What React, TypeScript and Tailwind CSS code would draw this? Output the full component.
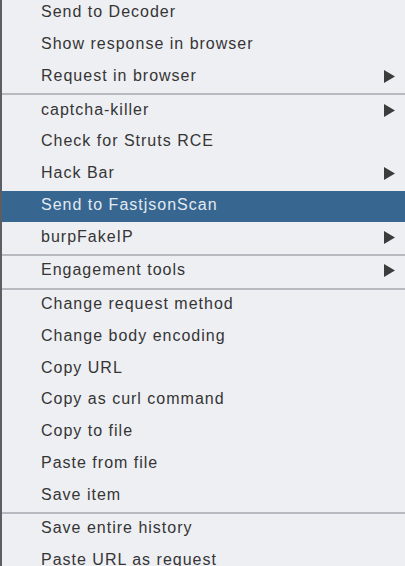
import React from 'react'

type Entry =
  | { kind: 'item'; label: string; submenu?: boolean; active?: boolean }
  | { kind: 'sep' }

const entries: Entry[] = [
  { kind: 'item', label: 'Send to Decoder' },
  { kind: 'item', label: 'Show response in browser' },
  { kind: 'item', label: 'Request in browser', submenu: true },
  { kind: 'sep' },
  { kind: 'item', label: 'captcha-killer', submenu: true },
  { kind: 'item', label: 'Check for Struts RCE' },
  { kind: 'item', label: 'Hack Bar', submenu: true },
  { kind: 'item', label: 'Send to FastjsonScan', active: true },
  { kind: 'item', label: 'burpFakeIP', submenu: true },
  { kind: 'sep' },
  { kind: 'item', label: 'Engagement tools', submenu: true },
  { kind: 'sep' },
  { kind: 'item', label: 'Change request method' },
  { kind: 'item', label: 'Change body encoding' },
  { kind: 'item', label: 'Copy URL' },
  { kind: 'item', label: 'Copy as curl command' },
  { kind: 'item', label: 'Copy to file' },
  { kind: 'item', label: 'Paste from file' },
  { kind: 'item', label: 'Save item' },
  { kind: 'sep' },
  { kind: 'item', label: 'Save entire history' },
  { kind: 'item', label: 'Paste URL as request' },
]

// submenu arrow, solid triangle
function Arrow({ active }: { active?: boolean }) {
  return (
    <svg width="11" height="13" viewBox="0 0 11 13" className="-mt-[2px] shrink-0">
      <path d="M0 0L11 6.5L0 13Z" fill={active ? '#e4ecf3' : '#3c3c3c'} />
    </svg>
  )
}

export default function App() {
  return (
    <div className="h-[566px] w-[405px] overflow-hidden bg-[#eeeff3]">
      <div
        className="-mt-[2px] flex flex-col border-l-2 border-[#5b5e63] text-[16px] tracking-[1px]"
        style={{ fontFamily: '"Liberation Sans", Arial, sans-serif' }}
      >
        {entries.map((e, i) =>
          e.kind === 'sep' ? (
            <div key={i} className="h-[2px] bg-[#b7bac1]" />
          ) : (
            <div
              key={i}
              className={
                e.active
                  ? 'flex h-[31.75px] items-center justify-between bg-[#376690] pl-[39px] pr-[10px] text-[#e2eaf2]'
                  : 'flex h-[31.75px] items-center justify-between pl-[39px] pr-[10px] text-[#353535]'
              }
            >
              <span className="-mt-[3px]">{e.label}</span>
              {e.submenu && <Arrow active={e.active} />}
            </div>
          )
        )}
      </div>
    </div>
  )
}
